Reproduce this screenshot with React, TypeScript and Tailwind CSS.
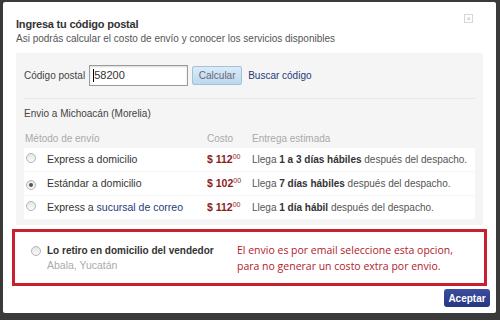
import * as React from "react"

/**
 * Shipping quote modal: postal code lookup + shipping methods
 */

const rows = [
  {
    label: <>Express a domicilio</>,
    price: "112",
    eta: (
      <>
        Llega <b className="text-[#333]">1 a 3 días hábiles</b> después del despacho.
      </>
    ),
    checked: false,
  },
  {
    label: <>Estándar a domicilio</>,
    price: "102",
    eta: (
      <>
        Llega <b className="text-[#333]">7 días hábiles</b> después del despacho.
      </>
    ),
    checked: true,
  },
  {
    label: (
      <>
        Express a <span className="text-[#1e3a7a]">sucursal de correo</span>
      </>
    ),
    price: "112",
    eta: (
      <>
        Llega <b className="text-[#333]">1 día hábil</b> después del despacho.
      </>
    ),
    checked: false,
  },
]

function Radio({ checked }: { checked?: boolean }) {
  return (
    <span className="inline-flex h-[10px] w-[10px] shrink-0 items-center justify-center rounded-full border border-[#b5b5b5] bg-gradient-to-b from-[#e6e6e6] to-[#fafafa]">
      {checked && <span className="h-[4px] w-[4px] rounded-full bg-[#555]" />}
    </span>
  )
}

export default function App() {
  return (
    <div
      className="h-[320px] w-[500px] overflow-hidden bg-[#3a3a3a] pl-[3px] pt-[2px]"
      style={{ fontFamily: "Arial, 'Liberation Sans', sans-serif" }}
    >
      <div className="relative h-[311px] w-[493px] rounded-[2px] bg-white">
        {/* Close */}
        <span className="absolute right-[23px] top-[12px] flex h-[9px] w-[9px] items-center justify-center border border-[#d6d6d6] text-[8px] leading-none text-[#bbb]">
          ×
        </span>

        {/* Header */}
        <div className="px-[13px] pt-[14px]">
          <div className="text-[11px] font-bold leading-[16px] tracking-[-0.2px] text-[#333]">
            Ingresa tu código postal
          </div>
          <div className="text-[10px] leading-[13px] text-[#555]">
            Asi podrás calcular el costo de envío y conocer los servicios disponibles
          </div>
        </div>

        {/* Gray panel */}
        <div className="mx-[13px] mt-[8px] h-[172px] bg-[#f5f5f5] px-[8px]">
          <div className="flex h-[46px] items-center border-b border-[#e8e8e8] text-[10px]">
            <span className="text-[#444]">Código postal</span>
            <div className="ml-[4px] flex h-[21px] w-[99px] items-center border border-[#9a9a9a] bg-white px-[3px] text-[11px] text-[#333] shadow-[inset_0_1px_2px_rgba(0,0,0,0.15)]">
              <span className="h-[13px] w-px bg-black" />
              58200
            </div>
            <button className="ml-[4px] h-[19px] w-[50px] rounded-[2px] border border-[#9fc3dc] bg-gradient-to-b from-[#dcebf6] to-[#bcd8ec] text-[10px] text-[#667]">
              Calcular
            </button>
            <span className="ml-[6px] text-[#1e3a7a]">Buscar código</span>
          </div>

          <div className="pt-[9px] text-[10px] leading-[12px] text-[#444]">Envio a Michoacán (Morelia)</div>

          <div className="mt-[12px] flex h-[12px] items-center text-[10px] text-[#aaa]">
            <span className="w-[183px] pl-[1px]">Método de envío</span>
            <span className="w-[45px]">Costo</span>
            <span>Entrega estimada</span>
          </div>

          <div className="mt-[4px] flex flex-col gap-[1px]">
            {rows.map((r, i) => (
              <div key={i} className="flex h-[23px] items-center bg-white">
                <span className="flex w-[183px] items-center text-[10.5px]">
                  <span className="ml-[2px] mr-[11px]">
                    <Radio checked={r.checked} />
                  </span>
                  <span className="text-[#333]">{r.label}</span>
                </span>
                <span className="w-[45px] text-[10.5px] font-bold text-[#8c1c1c]">
                  $ {r.price}
                  <sup className="text-[7px] font-normal">00</sup>
                </span>
                <span className="whitespace-nowrap text-[10px] text-[#555]">{r.eta}</span>
              </div>
            ))}
          </div>
        </div>

        {/* Highlighted pickup option */}
        <div className="mx-[9px] mt-[4px] flex h-[57px] items-center border-[3px] border-[#c8202f] pl-[16px]">
          <span className="-mt-[13px] mr-[6px]">
            <Radio />
          </span>
          <div className="w-[190px]">
            <div className="whitespace-nowrap text-[10px] font-bold leading-[14px] text-[#333]">
              Lo retiro en domicilio del vendedor
            </div>
            <div className="text-[10.5px] leading-[14px] text-[#aaa]">Abala, Yucatán</div>
          </div>
          <div
            className="whitespace-nowrap text-[10.5px] leading-[16px] text-[#b3202c]"
            style={{ fontFamily: "'Open Sans', sans-serif" }}
          >
            El envio es por email seleccione esta opcion,
            <br />
            para no generar un costo extra por envio.
          </div>
        </div>

        {/* Footer */}
        <div className="flex justify-end px-[6px] pt-[3px]">
          <button className="h-[18px] w-[46px] rounded-[3px] bg-gradient-to-b from-[#3c4d9e] to-[#263680] text-[10px] font-bold text-white">
            Aceptar
          </button>
        </div>
      </div>
    </div>
  )
}
